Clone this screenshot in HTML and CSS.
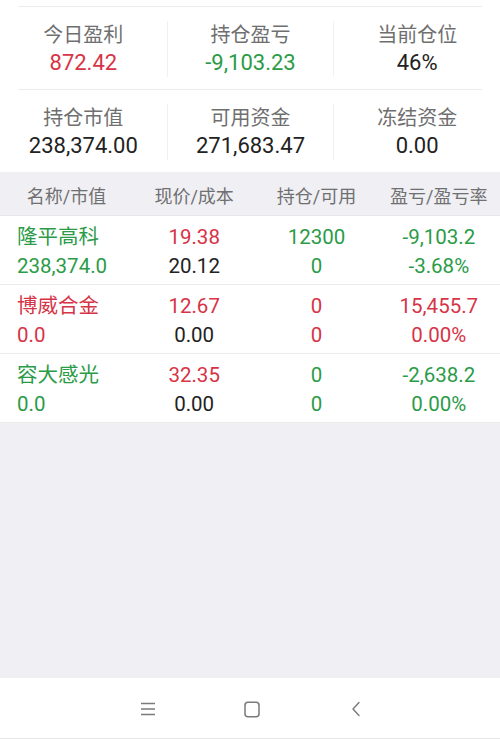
FILE: index.html
```html
<!DOCTYPE html>
<html lang="zh-CN">
<head>
<meta charset="utf-8">
<title>持仓</title>
<link rel="stylesheet" href="styles.css">
</head>
<body>
<div class="page">
  <section class="stats">
    <div class="divider"></div>
    <div class="stat-row">
      <div class="stat"><div class="stat-label">今日盈利</div><div class="stat-value red">872.42</div></div>
      <div class="stat"><div class="stat-label">持仓盈亏</div><div class="stat-value green">-9,103.23</div></div>
      <div class="stat"><div class="stat-label">当前仓位</div><div class="stat-value">46%</div></div>
    </div>
    <div class="divider"></div>
    <div class="stat-row">
      <div class="stat"><div class="stat-label">持仓市值</div><div class="stat-value">238,374.00</div></div>
      <div class="stat"><div class="stat-label">可用资金</div><div class="stat-value">271,683.47</div></div>
      <div class="stat"><div class="stat-label">冻结资金</div><div class="stat-value">0.00</div></div>
    </div>
  </section>

  <section class="table">
    <div class="thead">
      <div>名称/市值</div>
      <div>现价/成本</div>
      <div>持仓/可用</div>
      <div>盈亏/盈亏率</div>
    </div>
    <div class="trow">
      <div class="cell name green"><div>隆平高科</div><div>238,374.0</div></div>
      <div class="cell"><div class="red">19.38</div><div>20.12</div></div>
      <div class="cell green"><div>12300</div><div>0</div></div>
      <div class="cell green"><div>-9,103.2</div><div>-3.68%</div></div>
    </div>
    <div class="trow">
      <div class="cell name red"><div>博威合金</div><div>0.0</div></div>
      <div class="cell"><div class="red">12.67</div><div>0.00</div></div>
      <div class="cell red"><div>0</div><div>0</div></div>
      <div class="cell red"><div>15,455.7</div><div>0.00%</div></div>
    </div>
    <div class="trow">
      <div class="cell name green"><div>容大感光</div><div>0.0</div></div>
      <div class="cell"><div class="red">32.35</div><div>0.00</div></div>
      <div class="cell green"><div>0</div><div>0</div></div>
      <div class="cell green"><div>-2,638.2</div><div>0.00%</div></div>
    </div>
  </section>

  <div class="filler"></div>

  <nav class="navbar">
    <svg class="nav-icon" width="16" height="16" viewBox="0 0 16 16">
      <path d="M1 2.5H15M1 8H15M1 13.5H15" stroke="#7a7a7a" stroke-width="1.4" fill="none"/>
    </svg>
    <svg class="nav-icon" width="16" height="17" viewBox="0 0 16 17">
      <rect x="1" y="1.2" width="14" height="14.6" rx="3" ry="3" stroke="#7a7a7a" stroke-width="1.5" fill="none"/>
    </svg>
    <svg class="nav-icon" width="10" height="16" viewBox="0 0 10 16">
      <path d="M8 1.5L2 8L8 14.5" stroke="#7a7a7a" stroke-width="1.4" fill="none" stroke-linecap="round" stroke-linejoin="round"/>
    </svg>
  </nav>
</div>
</body>
</html>
```

FILE: styles.css
```css
* { box-sizing: border-box; }

html, body {
  margin: 0;
  padding: 0;
  background: #ffffff;
}

body {
  font-family: Roboto, "Noto Sans CJK SC", "Noto Sans", sans-serif;
  color: #222222;
}

.page {
  width: 500px;
  height: 739px;
  display: flex;
  flex-direction: column;
  background: #ffffff;
}

.red { color: #d63447; }
.green { color: #2b9b48; }

/* ---- stats ---- */
.stats {
  padding-top: 6px;
  background: #ffffff;
}

.divider {
  height: 1px;
  margin: 0 18px;
  background: #ececec;
}

.stat-row {
  height: 82px;
  display: grid;
  grid-template-columns: repeat(3, 1fr);
  padding-top: 14px;
}

.stat {
  height: 56px;
  text-align: center;
}

.stat + .stat {
  border-left: 1px solid #f1f1f1;
}

.stat-label {
  font-size: 20px;
  line-height: 28px;
  color: #6f6f6f;
}

.stat-value {
  font-size: 22px;
  line-height: 28px;
}

/* ---- table ---- */
.thead {
  height: 44px;
  display: grid;
  grid-template-columns: 133px 1fr 1fr 1fr;
  align-items: center;
  padding-top: 3px;
  background: #efeff4;
  border-bottom: 1px solid #e6e6ea;
  font-size: 18px;
  color: #707070;
  text-align: center;
}

.trow {
  height: 69px;
  display: grid;
  grid-template-columns: 133px 1fr 1fr 1fr;
  padding-top: 7px;
  border-bottom: 1px solid #ebebeb;
  background: #ffffff;
}

.cell {
  text-align: center;
  font-size: 20.5px;
  line-height: 29px;
}

.cell.name {
  text-align: left;
  padding-left: 17px;
}

.filler {
  flex: 1;
  background: #efeff4;
}

/* ---- nav bar ---- */
.navbar {
  height: 61px;
  display: flex;
  align-items: center;
  justify-content: center;
  background: #ffffff;
  border-bottom: 1px solid #e6e6e6;
  padding-top: 2px;
}

.nav-icon:nth-child(1) { margin-right: 88px; }
.nav-icon:nth-child(2) { margin-right: 91px; }
```
